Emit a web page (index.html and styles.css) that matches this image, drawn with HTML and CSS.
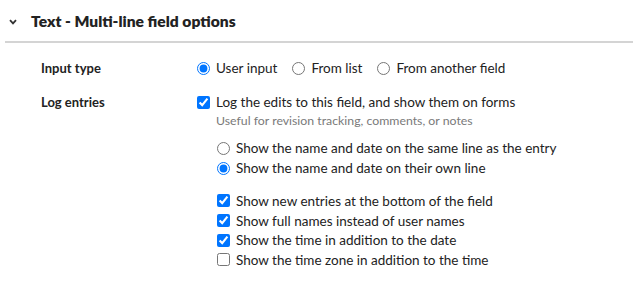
FILE: index.html
```html
<!DOCTYPE html>
<html>
<head>
<meta charset="utf-8">
<link rel="stylesheet" href="styles.css">
</head>
<body>
<div class="panel">
  <div class="header">
    <svg class="chev" width="8" height="6" viewBox="0 0 8 6"><path d="M1 1.2 L4 4.4 L7 1.2" fill="none" stroke="#333" stroke-width="1.8"/></svg>
    <span class="title">Text - Multi-line field options</span>
  </div>
  <div class="form">
    <div class="label">Input type</div>
    <div class="controls inline">
      <label class="opt"><input type="radio" name="it" checked><span>User input</span></label>
      <label class="opt"><input type="radio" name="it"><span>From list</span></label>
      <label class="opt"><input type="radio" name="it"><span>From another field</span></label>
    </div>
    <div class="label">Log entries</div>
    <div class="controls">
      <label class="opt"><input type="checkbox" checked><span>Log the edits to this field, and show them on forms</span></label>
      <div class="hint">Useful for revision tracking, comments, or notes</div>
      <div class="sub group1">
        <label class="opt"><input type="radio" name="nd"><span>Show the name and date on the same line as the entry</span></label>
        <label class="opt"><input type="radio" name="nd" checked><span>Show the name and date on their own line</span></label>
      </div>
      <div class="sub group2">
        <label class="opt"><input type="checkbox" checked><span>Show new entries at the bottom of the field</span></label>
        <label class="opt"><input type="checkbox" checked><span>Show full names instead of user names</span></label>
        <label class="opt"><input type="checkbox" checked><span>Show the time in addition to the date</span></label>
        <label class="opt"><input type="checkbox"><span>Show the time zone in addition to the time</span></label>
      </div>
    </div>
  </div>
</div>
</body>
</html>
```
FILE: styles.css
```css
html, body {
  margin: 0;
  padding: 0;
  background: #fff;
}
body {
  font-family: Lato, "Liberation Sans", sans-serif;
  color: #222;
}
.panel {
  width: 635px;
}
.header {
  display: flex;
  align-items: center;
  height: 43px;
  margin: 0 2px 0 5px;
  border-bottom: 2px solid #d4d4d4;
  box-sizing: border-box;
  padding-left: 4px;
}
.chev {
  margin-right: 14px;
  margin-top: 2px;
}
.title {
  font-size: 15.6px;
  font-weight: 800;
  color: #222;
}
.form {
  display: grid;
  grid-template-columns: 155px 1fr;
  row-gap: 14px;
  padding: 15px 0 0 41px;
}
.label {
  font-size: 13px;
  font-weight: 700;
  line-height: 20px;
  color: #222;
}
.controls.inline {
  display: flex;
  gap: 14px;
}
.opt {
  display: flex;
  align-items: center;
  height: 20px;
  font-size: 13.5px;
  color: #222;
}
.opt input {
  margin: 0 6px 0 1px;
  width: 13px;
  height: 13px;
}
.hint {
  font-size: 12.3px;
  color: #7a7a7a;
  margin-left: 20px;
  line-height: 18px;
}
.sub {
  margin-left: 20px;
}
.group1 {
  margin-top: 8px;
}
.group1 .opt { height: 20px; }
.group2 {
  margin-top: 13px;
}
.group2 .opt { height: 19.7px; }
```
